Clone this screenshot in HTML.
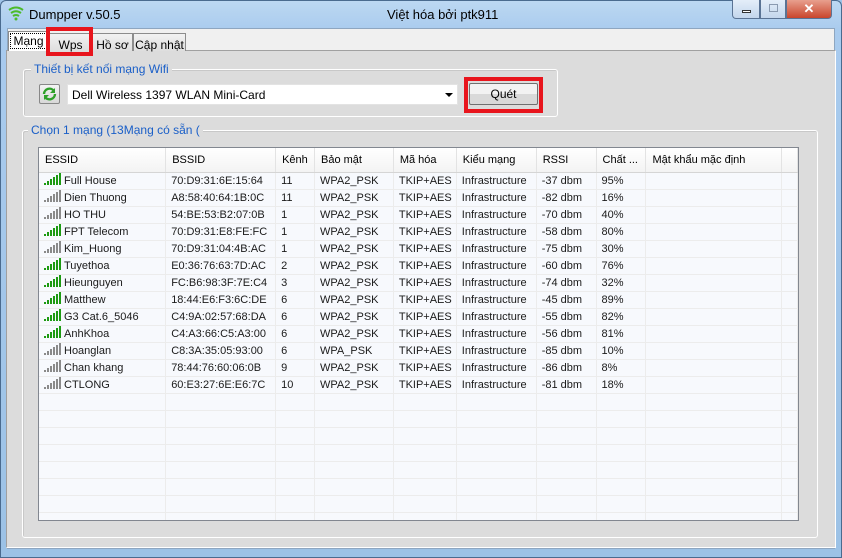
<!DOCTYPE html>
<html><head><meta charset="utf-8"><style>
*{margin:0;padding:0;box-sizing:border-box}
body{width:842px;height:558px;overflow:hidden;font-family:"Liberation Sans",sans-serif;font-size:11px;color:#000;background:#9fc4e8;position:relative}
.frame{position:absolute;left:0;top:0;width:842px;height:558px;background:linear-gradient(180deg,#bcd8f2 0,#a9cbee 30px,#9cc2e6 100%);border:1px solid #4a6b8f;border-radius:6px 6px 0 0}
.title{position:absolute;left:0;top:0;width:842px;height:28px}
.title .t1{position:absolute;left:29px;top:7px;font-size:13px}
.title .t2{position:absolute;left:387px;top:7px;font-size:13px}
.wbtn{position:absolute;top:0;height:19px;border:1px solid #5a7394;border-top:none}
.client{position:absolute;left:7px;top:28px;width:828px;height:521px;background:#f0f0f0;border:1px solid #8ea6c0}
.tabs{position:absolute;left:8px;top:31px;height:20px}
.tab{position:absolute;top:2px;height:18px;border:1px solid #8c8c8c;border-bottom:none;background:linear-gradient(#f2f2f2,#dedede);padding:2px 0 0;font-size:12px;white-space:nowrap;text-align:center}
.page{position:absolute;left:6px;top:50px;width:830px;height:498px;background:#dcdcdc;border:1px solid #a0a0a0;border-right-color:#fff;border-bottom-color:#fff}
.grp{position:absolute;border:1px solid #fff;border-radius:3px;box-shadow:inset 1px 1px 0 #c8c8c8}
.glabel{position:absolute;background:#dcdcdc;color:#1a5fc8;font-size:12px;padding:0 3px}
.lv{position:absolute;left:38px;top:147px;width:761px;height:374px;background:#f7f9fd;border:1px solid #828790;overflow:hidden}
table{border-collapse:collapse;table-layout:fixed;position:absolute;left:0;top:0}
th{height:24px;font-weight:normal;text-align:left;padding-left:6px;background:linear-gradient(#fff,#f3f3f3);border-right:1px solid #e3e3e3;border-bottom:1px solid #d5d5d5;white-space:nowrap;overflow:hidden}
td{height:17px;padding-left:5px;border-right:1px solid #ececec;border-bottom:1px solid #ececec;white-space:nowrap;overflow:hidden;color:#1a1a1a}
.sig{display:inline-block;width:17px;height:11px;position:relative;vertical-align:-1px;margin-right:3px}
.sig i{position:absolute;bottom:0;width:2px}
</style></head><body>
<div class="frame"></div>
<div class="title">
 <svg style="position:absolute;left:8px;top:6px" width="16" height="16" viewBox="0 0 16 16"><path d="M1 4q7-5 14 0" stroke="#4cbb2a" stroke-width="2" fill="none"/><path d="M3 7q5-3.5 10 0" stroke="#4cbb2a" stroke-width="2" fill="none"/><path d="M5 10q3-2 6 0" stroke="#4cbb2a" stroke-width="2" fill="none"/><circle cx="8" cy="13" r="1.5" fill="#4cbb2a"/></svg>
 <span class="t1">Dumpper v.50.5</span><span class="t2">Việt hóa bởi ptk911</span>
 <div class="wbtn" style="left:732px;width:28px;background:linear-gradient(#e4eef9,#c3d6ec);border-radius:0 0 0 4px"><div style="position:absolute;left:9px;top:10px;width:9px;height:3px;background:#fff;border:1px solid #333"></div></div>
 <div class="wbtn" style="left:760px;width:26px;background:linear-gradient(#e4eef9,#c3d6ec)"><div style="position:absolute;left:8px;top:4px;width:9px;height:8px;border:1px solid #8a9ab0"></div></div>
 <div class="wbtn" style="left:786px;width:46px;background:linear-gradient(#e8a08e,#c9452c);border-radius:0 0 4px 0;color:#fff;font-size:13px;font-weight:bold;text-align:center;line-height:17px">✕</div>
</div>
<div class="client"></div>
<div class="page"></div>
<div class="tabs">
 <div class="tab" style="left:0;width:41px;top:0;height:20px;background:#fff;z-index:2;outline:1px dotted #000;outline-offset:-3px;padding-top:2px">Mạng</div>
 <div class="tab" style="left:41px;width:43px;padding-top:4px">Wps</div>
 <div class="tab" style="left:84px;width:41px;padding-top:4px">Hồ sơ</div>
 <div class="tab" style="left:125px;width:53px;padding-top:4px">Cập nhật</div>
</div>
<div style="position:absolute;left:46px;top:27px;width:47px;height:29px;border:4px solid #e8151d;z-index:5"></div>

<div class="grp" style="left:23px;top:69px;width:535px;height:48px"></div>
<div class="glabel" style="left:31px;top:62px">Thiết bị kết nối mạng Wifi</div>
<div style="position:absolute;left:39px;top:84px;width:21px;height:20px;border:1px solid #888;border-radius:2px;background:linear-gradient(#f4f4f4,#d8d8d8)">
 <svg width="19" height="18" viewBox="0 0 19 18"><path d="M4 9a5.5 5.5 0 0 1 10-3" stroke="#2fa12a" stroke-width="2.4" fill="none"/><path d="M15 3v5h-5z" fill="#2fa12a"/><path d="M15 9a5.5 5.5 0 0 1-10 3" stroke="#2fa12a" stroke-width="2.4" fill="none"/><path d="M4 15v-5h5z" fill="#2fa12a"/></svg>
</div>
<div style="position:absolute;left:67px;top:84px;width:391px;height:21px;background:#fff;border:1px solid #e3e3e3;padding:3px 4px;font-size:12px">Dell Wireless 1397 WLAN Mini-Card
 <div style="position:absolute;right:4px;top:8px;width:0;height:0;border-left:4px solid transparent;border-right:4px solid transparent;border-top:4px solid #000"></div></div>
<div style="position:absolute;left:464px;top:77px;width:79px;height:36px;border:4px solid #e8151d"></div>
<div style="position:absolute;left:469px;top:83px;width:69px;height:22px;border:1px solid #707070;border-radius:2px;background:linear-gradient(#f2f2f2 50%,#d9d9d9 50%);text-align:center;line-height:20px;font-size:12px">Quét</div>

<div class="grp" style="left:22px;top:130px;width:796px;height:408px"></div>
<div class="glabel" style="left:28px;top:123px">Chọn 1 mạng (13Mạng có sẵn (</div>

<div class="lv">
<table>
<colgroup><col style="width:127px"><col style="width:110px"><col style="width:39px"><col style="width:79px"><col style="width:63px"><col style="width:80px"><col style="width:60px"><col style="width:50px"><col style="width:136px"><col style="width:16px"></colgroup>
<tr><th>ESSID</th><th>BSSID</th><th>Kênh</th><th>Bảo mật</th><th>Mã hóa</th><th>Kiểu mạng</th><th>RSSI</th><th>Chất ...</th><th>Mật khẩu mặc định</th><th></th></tr>
<tbody id="b"></tbody>
</table>
</div>
<script>
var d=[["Full House","70:D9:31:6E:15:64","11","WPA2_PSK","-37","95%",1],
["Dien Thuong","A8:58:40:64:1B:0C","11","WPA2_PSK","-82","16%",0],
["HO THU","54:BE:53:B2:07:0B","1","WPA2_PSK","-70","40%",0],
["FPT Telecom","70:D9:31:E8:FE:FC","1","WPA2_PSK","-58","80%",1],
["Kim_Huong","70:D9:31:04:4B:AC","1","WPA2_PSK","-75","30%",0],
["Tuyethoa","E0:36:76:63:7D:AC","2","WPA2_PSK","-60","76%",1],
["Hieunguyen","FC:B6:98:3F:7E:C4","3","WPA2_PSK","-74","32%",1],
["Matthew","18:44:E6:F3:6C:DE","6","WPA2_PSK","-45","89%",1],
["G3 Cat.6_5046","C4:9A:02:57:68:DA","6","WPA2_PSK","-55","82%",1],
["AnhKhoa","C4:A3:66:C5:A3:00","6","WPA2_PSK","-56","81%",1],
["Hoanglan","C8:3A:35:05:93:00","6","WPA_PSK","-85","10%",0],
["Chan khang","78:44:76:60:06:0B","9","WPA2_PSK","-86","8%",0],
["CTLONG","60:E3:27:6E:E6:7C","10","WPA2_PSK","-81","18%",0]];
var h="";
function sig(g){var c=g?"#1d9a12":"#8a8a8a",s='<span class="sig">';for(var i=0;i<6;i++){s+='<i style="left:'+(i*3)+'px;height:'+(2+i*2)+'px;background:'+c+'"></i>';}return s+'</span>';}
d.forEach(function(r){h+="<tr><td>"+sig(r[6])+r[0]+"</td><td>"+r[1]+"</td><td>"+r[2]+"</td><td>"+r[3]+"</td><td>TKIP+AES</td><td>Infrastructure</td><td>"+r[4]+" dbm</td><td>"+r[5]+"</td><td></td><td></td></tr>";});
for(var k=0;k<8;k++)h+="<tr>"+"<td></td>".repeat(10)+"</tr>";
document.getElementById("b").innerHTML=h;
</script>
</body></html>
